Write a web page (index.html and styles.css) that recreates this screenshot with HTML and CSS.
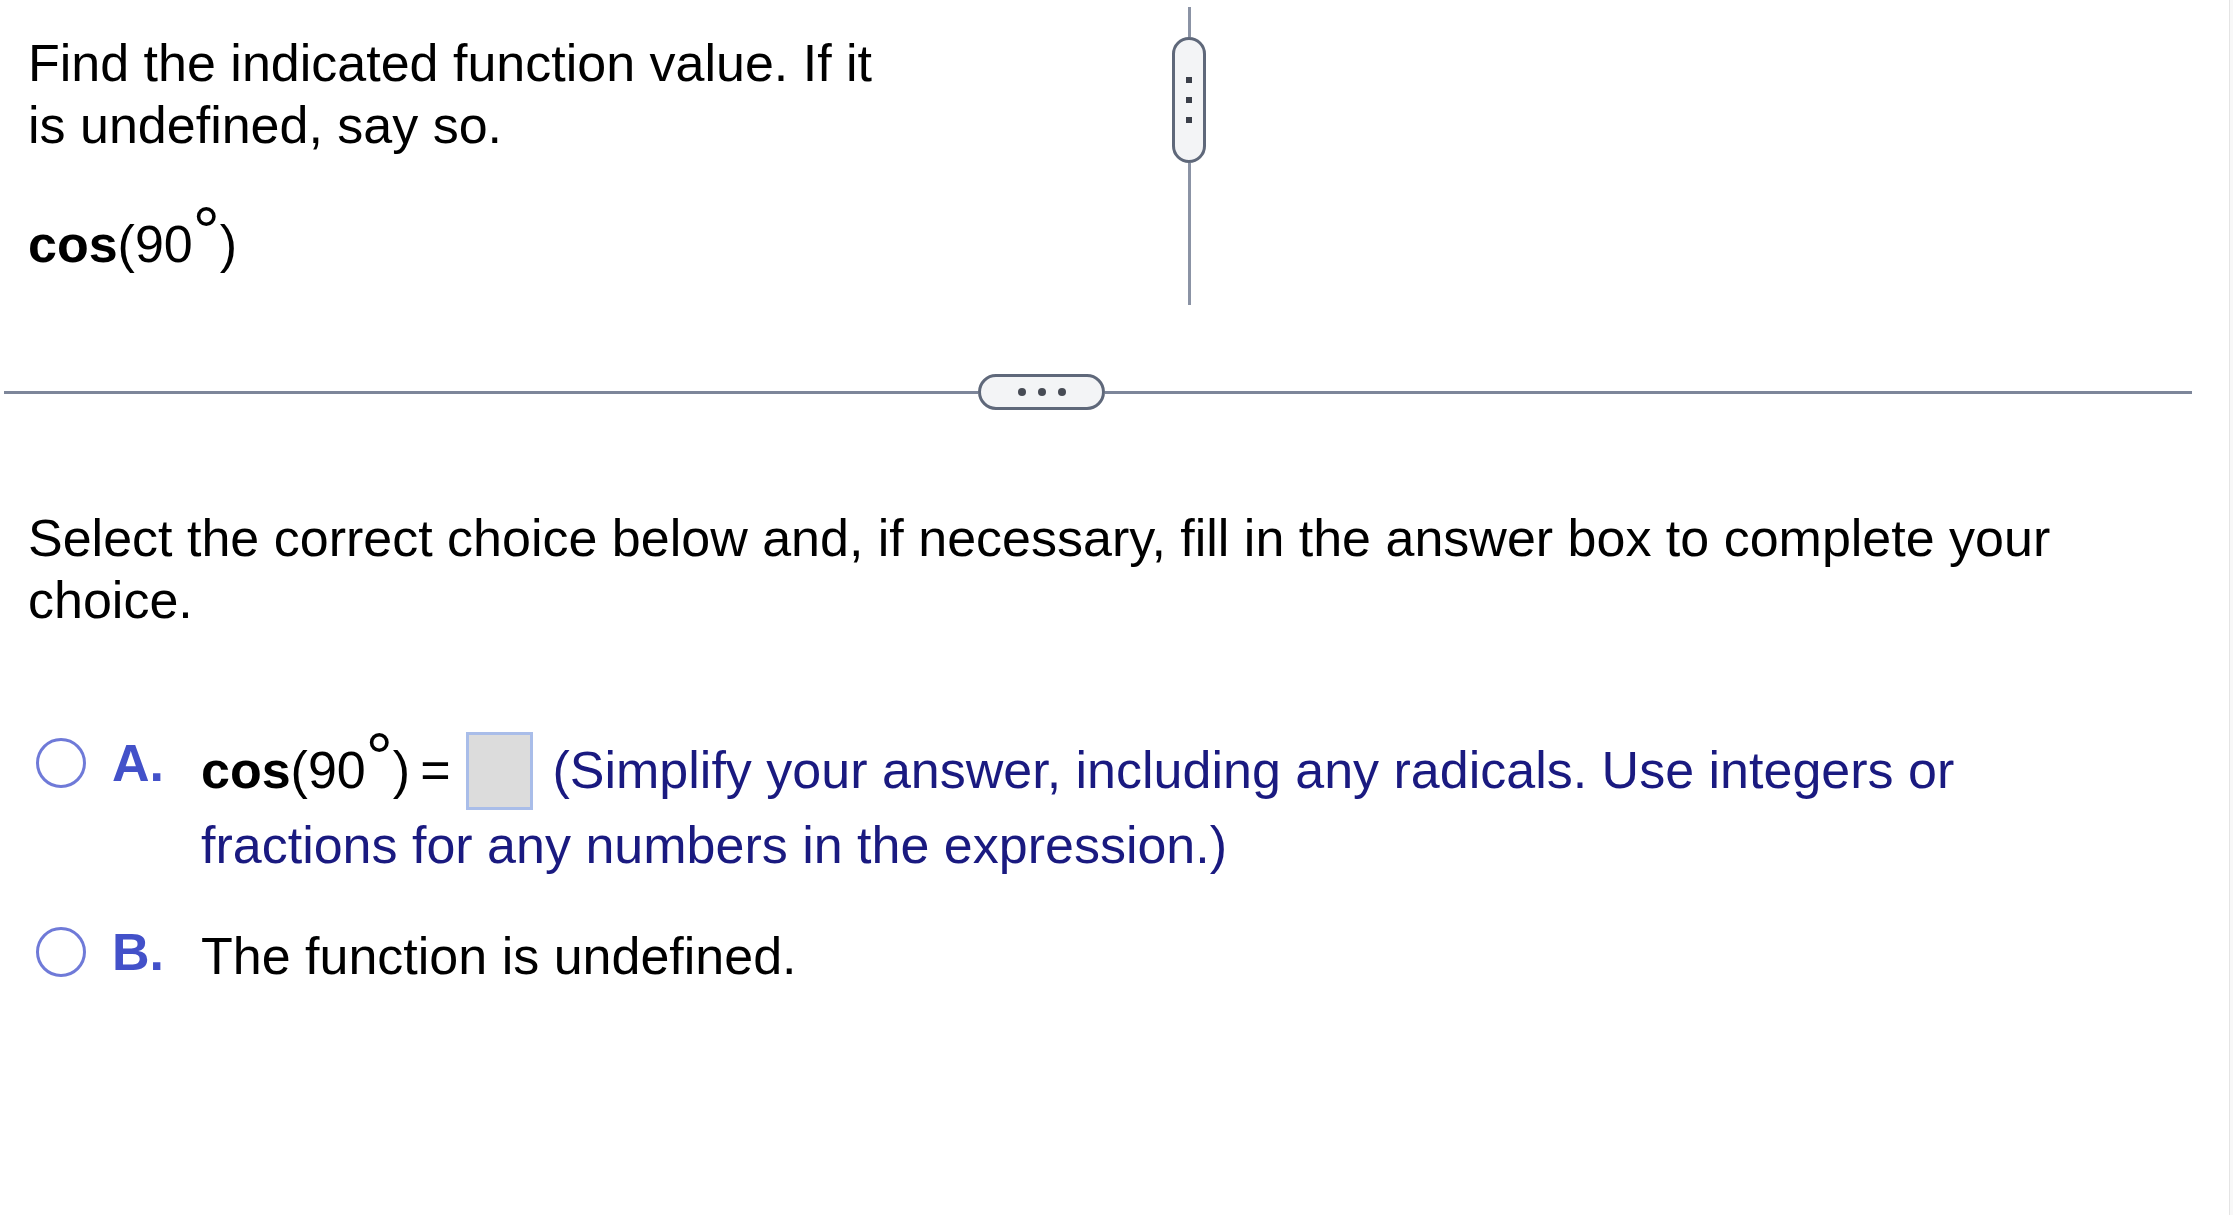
FILE: index.html
```html
<!DOCTYPE html>
<html lang="en">
<head>
<meta charset="utf-8">
<title>Find the indicated function value</title>
<link rel="stylesheet" href="styles.css">
</head>
<body>
<div class="page">
  <main class="content">
    <section class="top">
      <div class="question">
        <p class="prompt">Find the indicated function value. If it is undefined, say so.</p>
        <p class="expr"><span class="fn">cos</span>(90<span class="deg">°</span>)</p>
      </div>
      <div class="vsplit">
        <span class="vline short"></span>
        <span class="vhandle"><i></i><i></i><i></i></span>
        <span class="vline long"></span>
      </div>
    </section>
    <div class="hsplit">
      <span class="hline left"></span>
      <span class="hhandle"><i></i><i></i><i></i></span>
      <span class="hline right"></span>
    </div>
    <section class="answer">
      <p class="instr">Select the correct choice below and, if necessary, fill in the answer box to complete your choice.</p>
      <div class="options">
        <div class="option">
          <span class="radio"></span>
          <span class="label">A.</span>
          <p class="body"><span class="fn">cos</span>(90<span class="deg">°</span>)<span class="eq">=</span><span class="box"></span><span class="hint">(Simplify your answer, including any radicals. Use integers or fractions for any numbers in the expression.)</span></p>
        </div>
        <div class="option plain">
          <span class="radio"></span>
          <span class="label">B.</span>
          <p class="body">The function is undefined.</p>
        </div>
      </div>
    </section>
  </main>
  <div class="edge"></div>
</div>
</body>
</html>
```

FILE: styles.css
```css
html, body {
  margin: 0;
  padding: 0;
  background: #ffffff;
}
body {
  font-family: "Liberation Sans", Arial, sans-serif;
  color: #000;
}
p { margin: 0; }

.page {
  display: flex;
  width: 2233px;
  height: 1215px;
  overflow: hidden;
}
.content {
  width: 2229px;
}
.edge {
  flex: 1;
  border-left: 1px solid #e4e4e4;
  background: #f8f8f8;
}

/* top pane */
.top {
  display: flex;
  height: 374px;
}
.question {
  width: 1144px;
  padding: 32px 0 0 28px;
}
.prompt {
  font-size: 52px;
  line-height: 62px;
  max-width: 880px;
}
.expr {
  font-size: 52px;
  line-height: 62px;
  margin-top: 57px;
}
.fn { font-weight: bold; }
.deg {
  font-size: 1.3em;
  line-height: 0;
  vertical-align: 0.1em;
}

/* vertical splitter */
.vsplit {
  width: 34px;
  display: flex;
  flex-direction: column;
  align-items: center;
  padding-top: 7px;
}
.vline {
  width: 3px;
  background: #8b93a5;
}
.vline.short { height: 30px; }
.vline.long { height: 142px; }
.vhandle {
  box-sizing: border-box;
  width: 34px;
  height: 126px;
  border: 3px solid #5f687a;
  border-radius: 17px;
  background: #f3f4f6;
  display: flex;
  flex-direction: column;
  align-items: center;
  justify-content: center;
  gap: 14px;
}
.vhandle i {
  display: block;
  width: 6px;
  height: 6px;
  background: #3b3f4a;
}

/* horizontal splitter */
.hsplit {
  display: flex;
  align-items: center;
  height: 36px;
  margin-left: 4px;
  width: 2188px;
}
.hline {
  height: 3px;
  background: #7d869a;
}
.hline.left { width: 974px; }
.hline.right { flex: 1; }
.hhandle {
  box-sizing: border-box;
  width: 127px;
  height: 36px;
  border: 3px solid #5f687a;
  border-radius: 18px;
  background: #f3f4f6;
  display: flex;
  align-items: center;
  justify-content: center;
  gap: 12px;
}
.hhandle i {
  display: block;
  width: 8px;
  height: 8px;
  border-radius: 50%;
  background: #474b55;
}

/* answer pane */
.answer {
  padding: 97px 0 0 28px;
}
.instr {
  font-size: 52px;
  line-height: 62px;
  max-width: 2150px;
}
.options {
  margin-top: 101px;
  padding-left: 8px;
}
.option {
  display: flex;
  align-items: flex-start;
}
.option + .option {
  margin-top: 41px;
}
.radio {
  flex: none;
  box-sizing: border-box;
  width: 50px;
  height: 50px;
  margin-top: 6px;
  border: 3px solid #6f7ad8;
  border-radius: 50%;
  background: #fff;
}
.label {
  flex: none;
  width: 89px;
  margin-left: 26px;
  font-size: 52px;
  line-height: 62px;
  font-weight: bold;
  color: #4351c9;
}
.body {
  font-size: 52px;
  line-height: 70px;
  max-width: 1850px;
}
.eq {
  margin-left: 10px;
}
.box {
  display: inline-block;
  box-sizing: border-box;
  width: 67px;
  height: 78px;
  border: 3px solid #a9bde9;
  background: #dcdcdc;
  vertical-align: -22px;
  margin: 0 20px 0 15px;
}
.hint {
  color: #1a1a80;
}
```
